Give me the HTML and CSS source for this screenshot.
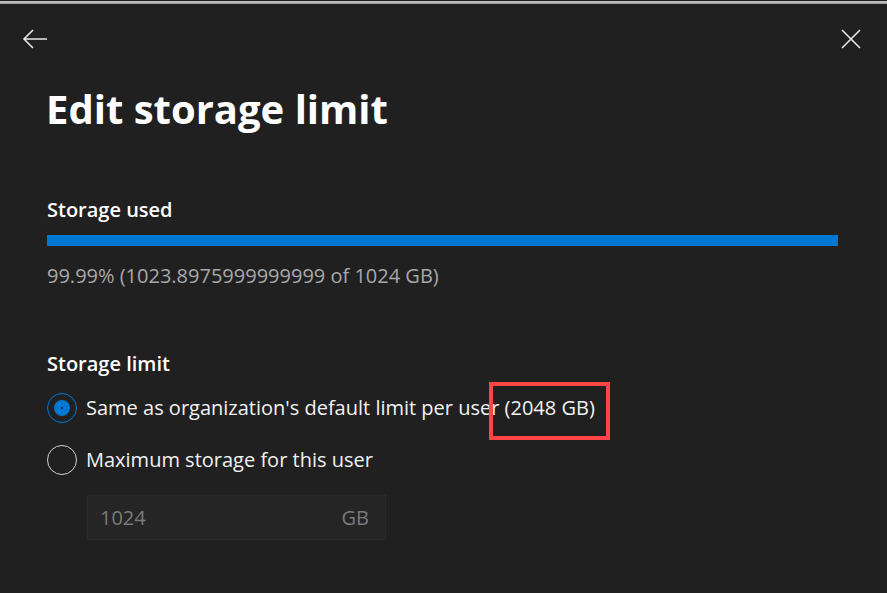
FILE: index.html
```html
<!DOCTYPE html>
<html lang="en">
<head>
<meta charset="utf-8">
<title>Edit storage limit</title>
<link rel="stylesheet" href="styles.css">
</head>
<body>
<div class="topline"></div>
<div class="panel">
  <div class="toolbar">
    <button class="icon-btn" aria-label="Back">
      <svg width="26" height="20" viewBox="0 0 26 20"><path d="M25 10H2M11 1L2 10l9 9" fill="none" stroke="#e8e8e8" stroke-width="1.6"/></svg>
    </button>
    <button class="icon-btn" aria-label="Close">
      <svg width="20" height="20" viewBox="0 0 20 20"><path d="M1 1l18 18M19 1L1 19" fill="none" stroke="#e8e8e8" stroke-width="1.6"/></svg>
    </button>
  </div>
  <div class="content">
    <h1 class="title">Edit storage limit</h1>
    <section class="used">
      <h2 class="label">Storage used</h2>
      <div class="bar"><div class="bar-fill" style="width:99.99%"></div></div>
      <p class="usage">99.99% (1023.8975999999999 of 1024 GB)</p>
    </section>
    <section class="limit">
      <h2 class="label">Storage limit</h2>
      <div class="options">
        <label class="option">
          <span class="radio checked"><span class="dot"></span></span>
          <span class="opt-text">Same as organization's default limit per user <span class="highlight">(2048 GB)</span></span>
        </label>
        <label class="option">
          <span class="radio"></span>
          <span class="opt-text">Maximum storage for this user</span>
        </label>
      </div>
      <div class="field">
        <span class="field-value">1024</span>
        <span class="field-unit">GB</span>
      </div>
    </section>
  </div>
</div>
</body>
</html>
```

FILE: styles.css
```css
html, body {
  margin: 0;
  padding: 0;
  background: #202020;
}
body {
  font-family: "Open Sans", "Noto Sans", sans-serif;
  color: #ffffff;
  width: 887px;
  height: 593px;
  overflow: hidden;
}
.topline {
  height: 3px;
  margin-top: 1px;
  background: linear-gradient(#c8c8c8, #9a9a9a);
}
.panel {
  display: flex;
  flex-direction: column;
}
.toolbar {
  display: flex;
  justify-content: space-between;
  align-items: center;
  padding: 0 26px 0 22px;
  margin-top: 25px;
  height: 20px;
}
.icon-btn {
  background: none;
  border: 0;
  padding: 0;
  display: flex;
}
.content {
  padding: 0 49px 0 47px;
}
.title {
  margin: 36px 0 0 -1px;
  font-size: 40px;
  font-weight: 700;
  line-height: 48px;
}
.used {
  margin-top: 65px;
}
.label {
  margin: 0;
  font-size: 20px;
  font-weight: 600;
  line-height: 24px;
}
.bar {
  margin-top: 13px;
  height: 11px;
  background: #3a3a3a;
}
.bar-fill {
  height: 100%;
  background: #0078d4;
}
.usage {
  margin: 18px 0 0;
  font-size: 20px;
  line-height: 24px;
  color: #a8a8a8;
}
.limit {
  margin-top: 64px;
}
.options {
  margin-top: 16px;
  display: flex;
  flex-direction: column;
  gap: 20px;
}
.option {
  display: flex;
  align-items: center;
  gap: 9px;
  font-size: 20px;
  line-height: 32px;
  color: #f2f2f2;
}
.radio {
  width: 28px;
  height: 28px;
  border: 1.5px solid #d0d0d0;
  border-radius: 50%;
  display: flex;
  align-items: center;
  justify-content: center;
  flex: none;
}
.radio.checked {
  border-color: #0078d4;
}
.dot {
  width: 16px;
  height: 16px;
  border-radius: 50%;
  background: #0078d4;
  position: relative;
}
.dot::after {
  content: "";
  position: absolute;
  left: 7px;
  top: 7px;
  width: 2px;
  height: 2px;
  border-radius: 50%;
  background: #101010;
}
.highlight {
  position: relative;
}
.highlight::before {
  content: "";
  position: absolute;
  left: -16px;
  top: -12px;
  width: 113px;
  height: 50px;
  border: 4px solid #ff4545;
}
.field {
  margin: 19px 0 0 40px;
  width: 269px;
  height: 43px;
  padding: 0 16px 0 12px;
  display: flex;
  align-items: center;
  justify-content: space-between;
  background: #252525;
  border: 1px solid #2a2a2a;
  font-size: 20px;
  color: #7a7a7a;
}
```
